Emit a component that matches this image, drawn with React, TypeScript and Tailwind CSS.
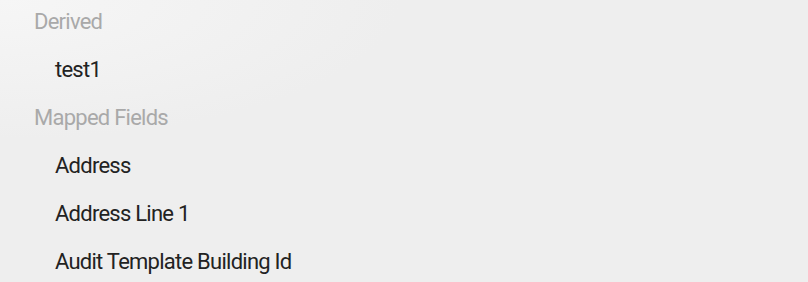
import React from 'react';

const groups = [
    { label: 'Derived', items: ['test1'] },
    { label: 'Mapped Fields', items: ['Address', 'Address Line 1', 'Audit Template Building Id'] },
];

const App: React.FC = () => {
    return (
        <div className="w-[808px] h-[282px] overflow-hidden bg-[#eeeeee] bg-[radial-gradient(ellipse_at_top_left,#f6f6f6_0%,#eeeeee_35%)] font-['Roboto',sans-serif] text-[22px] tracking-[-0.75px]">
            <div className="flex flex-col -mt-[3px]">
                {groups.map(g => (
                    <React.Fragment key={g.label}>
                        <div className="h-[48px] flex items-center pl-[34px] text-[#a9a9a9]">{g.label}</div>
                        {g.items.map(item => (
                            <div key={item} className="h-[48px] flex items-center pl-[55px] text-[#222222]">{item}</div>
                        ))}
                    </React.Fragment>
                ))}
            </div>
        </div>
    );
};

export default App;
